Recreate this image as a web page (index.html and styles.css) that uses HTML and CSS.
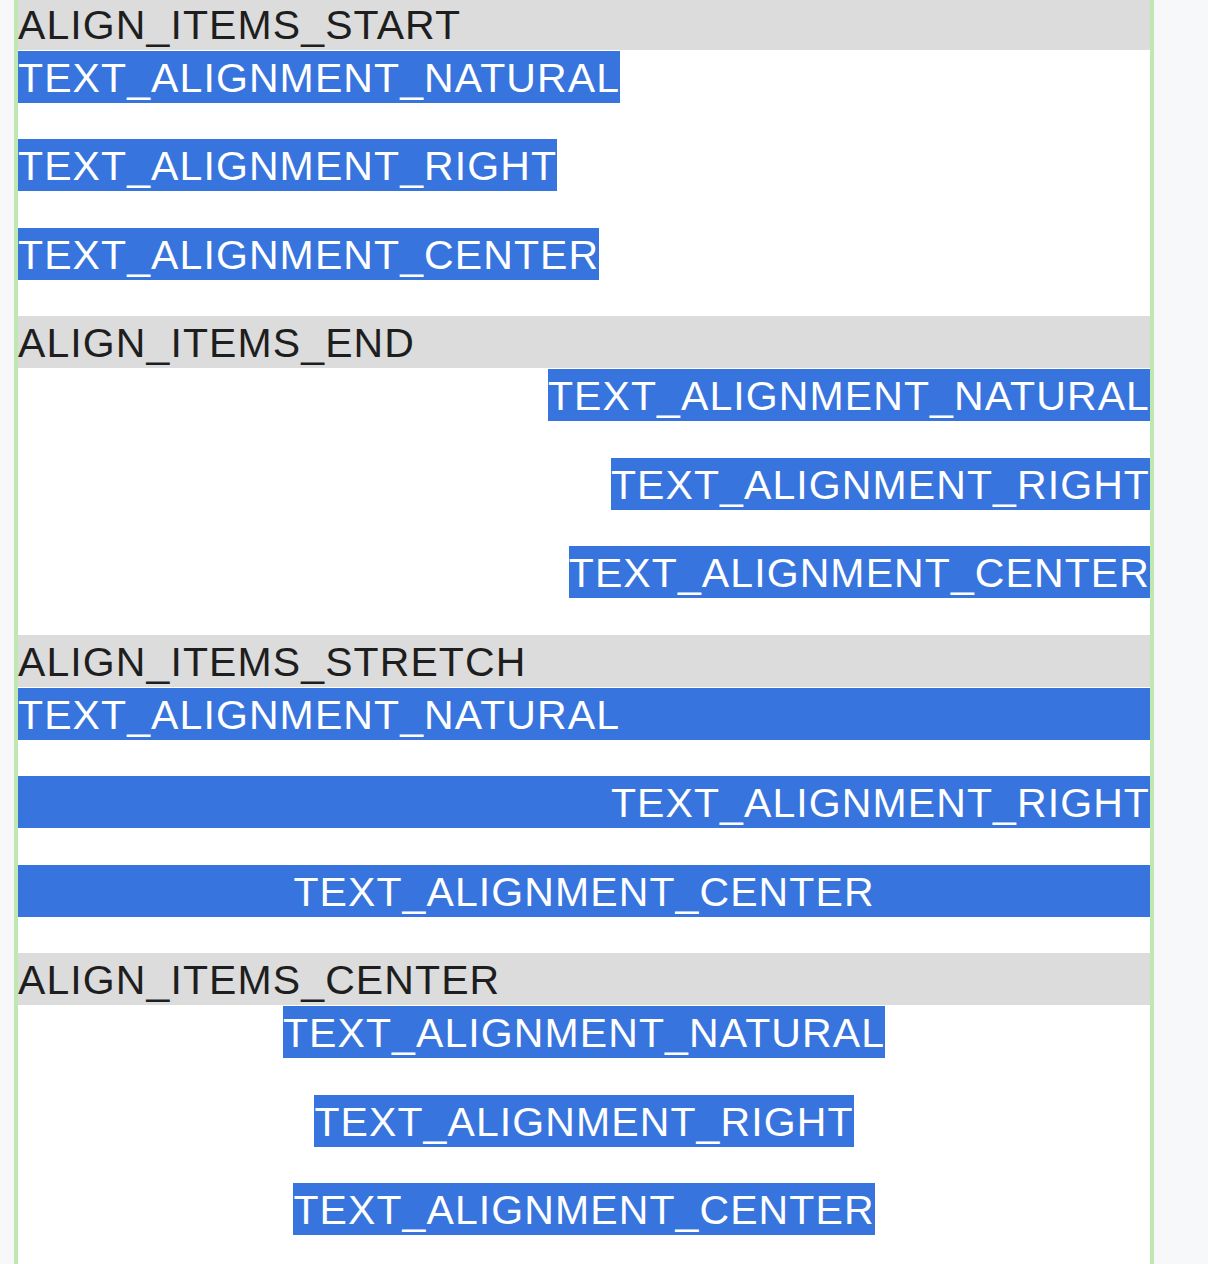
FILE: index.html
```html
<!DOCTYPE html>
<html>
<head>
    <title>Text alignment</title>
    <link rel="stylesheet" href="styles.css">
</head>
<body>
    <div class="screen">
        <div class="group align-start">
            <div class="group-title">ALIGN_ITEMS_START</div>
            <div class="label text-natural">TEXT_ALIGNMENT_NATURAL</div>
            <div class="label text-right">TEXT_ALIGNMENT_RIGHT</div>
            <div class="label text-center">TEXT_ALIGNMENT_CENTER</div>
        </div>
        <div class="group align-end">
            <div class="group-title">ALIGN_ITEMS_END</div>
            <div class="label text-natural">TEXT_ALIGNMENT_NATURAL</div>
            <div class="label text-right">TEXT_ALIGNMENT_RIGHT</div>
            <div class="label text-center">TEXT_ALIGNMENT_CENTER</div>
        </div>
        <div class="group align-stretch">
            <div class="group-title">ALIGN_ITEMS_STRETCH</div>
            <div class="label text-natural">TEXT_ALIGNMENT_NATURAL</div>
            <div class="label text-right">TEXT_ALIGNMENT_RIGHT</div>
            <div class="label text-center">TEXT_ALIGNMENT_CENTER</div>
        </div>
        <div class="group align-center">
            <div class="group-title">ALIGN_ITEMS_CENTER</div>
            <div class="label text-natural">TEXT_ALIGNMENT_NATURAL</div>
            <div class="label text-right">TEXT_ALIGNMENT_RIGHT</div>
            <div class="label text-center">TEXT_ALIGNMENT_CENTER</div>
        </div>
    </div>
</body>
</html>
```

FILE: styles.css
```css
html, body {
    margin: 0;
    height: 100%;
    overflow: hidden;
}
body {
    background-color: #f7f8fa;
    font-family: 'Liberation Sans', Arial, sans-serif;
}
.screen {
    box-sizing: border-box;
    width: 1140px;
    min-height: 100%;
    margin-left: 14px;
    border-left: 4px solid #bde9b0;
    border-right: 4px solid #bde9b0;
    background-color: #fff;
}
.group {
    display: flex;
    flex-direction: column;
}
.group:first-child {
    margin-top: -2.3px;
}
.align-start { align-items: flex-start; }
.align-end { align-items: flex-end; }
.align-stretch { align-items: stretch; }
.align-center { align-items: center; }

.group-title,
.label {
    box-sizing: border-box;
    height: 52px;
    padding-top: 3px;
    line-height: 49px;
    font-size: 41px;
    letter-spacing: 1.1px;
    white-space: nowrap;
}
.group-title {
    align-self: stretch;
    background-color: #dcdcdc;
    color: #1e1e1e;
    margin-bottom: 1.3px;
}
.label {
    background-color: #3774de;
    color: #fff;
    margin-bottom: 36.4px;
}
.text-natural { text-align: left; }
.text-right { text-align: right; }
.text-center { text-align: center; }
```
